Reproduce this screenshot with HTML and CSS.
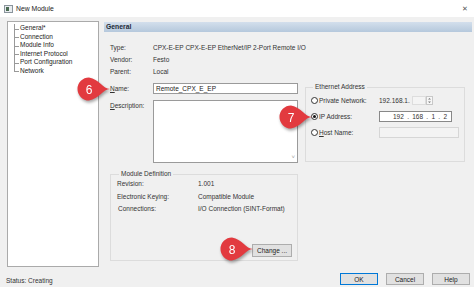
FILE: index.html
```html
<!DOCTYPE html>
<html lang="en">
<head>
    <meta charset="UTF-8">
    <meta name="viewport" content="width=device-width, initial-scale=1.0">
    <title>New Module</title>
    <link rel="stylesheet" href="styles.css">
</head>
<body>
    <div class="window">
        <!-- Title bar -->
        <div class="titlebar">
            <svg class="app-icon" width="9" height="8" viewBox="0 0 9 8">
                <rect x="0.5" y="0.5" width="8" height="7" fill="#e8ecef" stroke="#8a949c"/>
                <rect x="2" y="2" width="3" height="4" fill="#4a6b52"/>
            </svg>
            <span class="title">New Module</span>
            <span class="close">&#x2715;</span>
        </div>

        <div class="main">
            <!-- Category tree -->
            <ul class="tree">
                <li>General*</li>
                <li>Connection</li>
                <li>Module Info</li>
                <li>Internet Protocol</li>
                <li>Port Configuration</li>
                <li class="last">Network</li>
            </ul>

            <!-- General page -->
            <div class="page">
                <div class="page-head">General</div>

                <div class="info">
                    <div class="info-row"><span>Type:</span><span>CPX-E-EP CPX-E-EP EtherNet/IP 2-Port Remote I/O</span></div>
                    <div class="info-row"><span>Vendor:</span><span>Festo</span></div>
                    <div class="info-row"><span>Parent:</span><span>Local</span></div>
                </div>

                <div class="cols">
                    <div class="col-left">
                        <div class="field">
                            <label><u>N</u>ame:</label>
                            <div class="textbox">Remote_CPX_E_EP</div>
                        </div>
                        <div class="field desc">
                            <label><u>D</u>escription:</label>
                            <div class="textbox textarea">
                                <span class="scroll-up">&#x02C4;</span>
                                <span class="scroll-down">&#x02C5;</span>
                            </div>
                        </div>

                        <fieldset class="group module-def">
                            <legend>Module Definition</legend>
                            <div class="def-row"><span>Revision:</span><span>1.001</span></div>
                            <div class="def-row"><span>Electronic Keying:</span><span>Compatible Module</span></div>
                            <div class="def-row"><span class="indent">Connections:</span><span>I/O Connection (SINT-Format)</span></div>
                            <div class="def-actions">
                                <button class="btn btn-change">Change ...</button>
                            </div>
                        </fieldset>
                    </div>

                    <fieldset class="group eth">
                        <legend>Ethernet Address</legend>
                        <div class="eth-row">
                            <span class="radio"></span>
                            <span class="eth-label">Private Network:</span>
                            <span class="eth-value">
                                192.168.1.
                                <span class="spin-box"></span>
                                <svg class="spin" width="7" height="9" viewBox="0 0 7 9">
                                    <rect x="0.5" y="0.5" width="6" height="8" fill="#f7f7f7" stroke="#c8c8c8"/>
                                    <path d="M2 3.5 L3.5 2 L5 3.5 Z M2 5.5 L3.5 7 L5 5.5 Z" fill="#777"/>
                                </svg>
                            </span>
                        </div>
                        <div class="eth-row">
                            <span class="radio checked"></span>
                            <span class="eth-label">IP Address:</span>
                            <span class="ip-box">
                                <span>192</span><span>.</span><span>168</span><span>.</span><span>1</span><span>.</span><span>2</span>
                            </span>
                        </div>
                        <div class="eth-row">
                            <span class="radio"></span>
                            <span class="eth-label"><u>H</u>ost Name:</span>
                            <span class="host-box"></span>
                        </div>
                    </fieldset>
                </div>
            </div>
        </div>

        <!-- Status and buttons -->
        <div class="footer">
            <span class="status">Status: Creating</span>
            <button class="btn btn-default">OK</button>
            <button class="btn">Cancel</button>
            <button class="btn">Help</button>
        </div>

        <!-- Step callouts -->
        <svg class="callout callout-6" width="36" height="28" viewBox="0 0 36 28">
            <path d="M33 13 C26 13 22 3 12 1.5 A11.5 11.5 0 1 0 12 24.5 C22 23 26 13 33 13 Z" fill="#e23a3f"/>
            <text x="12" y="17.5" text-anchor="middle">6</text>
        </svg>
        <svg class="callout callout-7" width="36" height="28" viewBox="0 0 36 28">
            <path d="M33 13 C26 13 22 3 12 1.5 A11.5 11.5 0 1 0 12 24.5 C22 23 26 13 33 13 Z" fill="#e23a3f"/>
            <text x="12" y="17.5" text-anchor="middle">7</text>
        </svg>
        <svg class="callout callout-8" width="36" height="28" viewBox="0 0 36 28">
            <path d="M33 13 C26 13 22 3 12 1.5 A11.5 11.5 0 1 0 12 24.5 C22 23 26 13 33 13 Z" fill="#e23a3f"/>
            <text x="12" y="17.5" text-anchor="middle">8</text>
        </svg>
    </div>
</body>
</html>
```

FILE: styles.css
```css
html, body {
    margin: 0;
    background: #fff;
}
body {
    width: 474px;
    height: 289px;
    overflow: hidden;
    font-family: "Liberation Sans", Arial, sans-serif;
    font-size: 6.5px;
    color: #333;
}
.window {
    position: relative;
    height: 287px;
    background-color: #f0f0f0; /* dialog face */
}

/* Title bar */
.titlebar {
    height: 17px;
    background: #fff;
    display: flex;
    align-items: center;
    padding: 0 6px 0 4px;
}
.app-icon {
    margin-right: 3px;
}
.title {
    flex: 1;
    font-size: 6.8px;
    color: #222;
}
.close {
    font-size: 7px;
    color: #555;
}

/* Tree + page */
.main {
    display: flex;
    padding: 4px 2px 0 7px;
    height: 246px;
}
.tree {
    width: 92px;
    height: 246px;
    box-sizing: border-box;
    margin: 0;
    padding: 2px 0 0 0;
    list-style: none;
    background: #fff;
    border: 1px solid #aaa;
}
.tree li {
    position: relative;
    line-height: 8.6px;
    padding-left: 12px;
    color: #222;
}
.tree li::before {
    content: "";
    position: absolute;
    left: 6px;
    top: 0;
    height: 100%;
    border-left: 1px solid #999;
}
.tree li.last::before {
    height: 50%;
}
.tree li::after {
    content: "";
    position: absolute;
    left: 6px;
    top: 4.5px;
    width: 5px;
    border-top: 1px solid #999;
}

.page {
    flex: 1;
    margin-left: 5px;
}
.page-head {
    margin-top: 1px;
    height: 10px;
    line-height: 10px;
    padding-left: 2px;
    font-weight: bold;
    font-size: 6.8px;
    color: #1e2a36;
    background: linear-gradient(#d3dfec, #b5c8dc);
}

.info {
    margin-top: 10px;
    padding-left: 6px;
}
.info-row {
    display: grid;
    grid-template-columns: 43px 1fr;
    line-height: 12px;
}

.cols {
    display: flex;
    margin-top: 5px;
}
.col-left {
    width: 194px;
    padding-left: 6px;
    box-sizing: border-box;
}
.field {
    display: flex;
    align-items: center;
}
.field label {
    width: 43px;
    flex: none;
}
.textbox {
    position: relative;
    width: 145px;
    height: 11px;
    box-sizing: border-box;
    border: 1px solid #9a9a9a;
    background: #fff;
    line-height: 9px;
    padding-left: 2px;
    color: #222;
}
.desc {
    margin-top: 6px;
    align-items: flex-start;
}
.desc label {
    padding-top: 2px;
}
.textarea {
    height: 63px;
}
.scroll-up, .scroll-down {
    position: absolute;
    right: 2px;
    font-size: 6px;
    color: #999;
}
.scroll-up { top: 3px; }
.scroll-down { bottom: 0; }

/* Group boxes */
.group {
    margin: 0;
    border: 1px solid #dcdcdc;
    box-sizing: border-box;
}
.group legend {
    padding: 0 2px;
    margin-left: 2px;
    line-height: 8px;
}
.module-def {
    margin-top: 7px;
    height: 91px;
    padding: 0 5px 0 6px;
}
.def-row {
    display: grid;
    grid-template-columns: 81px 1fr;
    line-height: 12.5px;
}
.indent {
    padding-left: 1px;
}
.def-actions {
    margin-top: 28px;
    text-align: right;
}

.eth {
    margin-left: 7px;
    width: 160px;
    height: 79px;
    padding: 1px 5px 0 5px;
}
.eth-row {
    display: flex;
    align-items: center;
    height: 16px;
}
.radio {
    position: relative;
    width: 7px;
    height: 7px;
    box-sizing: border-box;
    border: 1px solid #333;
    border-radius: 50%;
    background: #fff;
    margin-right: 1px;
    flex: none;
}
.radio.checked::after {
    content: "";
    position: absolute;
    left: 1px;
    top: 1px;
    width: 3px;
    height: 3px;
    border-radius: 50%;
    background: #111;
}
.eth-label {
    width: 60px;
    flex: none;
}
.eth-value {
    display: flex;
    align-items: center;
}
.spin-box {
    margin-left: 2px;
    width: 14px;
    height: 9px;
    box-sizing: border-box;
    border: 1px solid #ddd;
    background: #f4f4f4;
}
.spin {
    display: block;
}
.ip-box {
    display: flex;
    justify-content: space-between;
    width: 73px;
    height: 11px;
    box-sizing: border-box;
    border: 1px solid #888;
    background: #fff;
    line-height: 9px;
    padding: 0 4px 0 13px;
}
.host-box {
    width: 80px;
    height: 11px;
    box-sizing: border-box;
    border: 1px solid #d6d6d6;
    background: #f3f3f3;
}

/* Buttons */
.btn {
    width: 38px;
    height: 12px;
    padding: 0;
    font-family: inherit;
    font-size: 6.5px;
    color: #222;
    background: #e1e1e1;
    border: 1px solid #adadad;
}
.btn-change {
    width: 40px;
    height: 13px;
}
.btn-default {
    border-color: #0078d7;
}

.footer {
    display: flex;
    align-items: center;
    padding: 6px 4px 0 6px;
    gap: 8px;
}
.status {
    flex: 1;
    padding-top: 2px;
}

/* Step callouts laid over the dialog */
.callout {
    position: absolute;
    filter: drop-shadow(1px 2px 1.5px rgba(0, 0, 0, 0.35));
}
.callout text {
    fill: #fff;
    font-family: "Liberation Sans", Arial, sans-serif;
    font-size: 12px;
}
.callout-6 { left: 77px; top: 76px; }
.callout-7 { left: 279px; top: 104px; }
.callout-8 { left: 220px; top: 236px; }
```
